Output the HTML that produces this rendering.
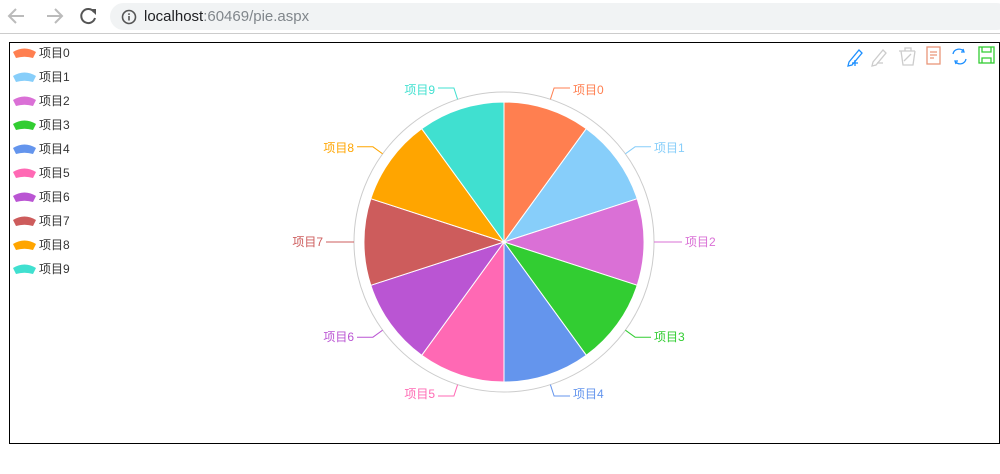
<!DOCTYPE html>
<html><head><meta charset="utf-8"><style>
body{margin:0;width:1000px;height:474px;background:#fff;overflow:hidden;font-family:"Liberation Sans","Noto Sans CJK SC",sans-serif;}
#bar{position:absolute;left:0;top:0;width:1000px;height:33px;background:#fff;border-bottom:1px solid #ccc;}
#url{position:absolute;left:110px;top:3px;width:900px;height:27px;border-radius:14px;background:#f1f3f4;}
#url span{position:absolute;left:34px;top:5px;font-size:15px;color:#202124;}
#box{position:absolute;left:9px;top:42px;width:989px;height:400px;border:1px solid #000;}
</style></head><body>
<div id="bar">
<svg width="110" height="33" style="position:absolute;left:0;top:0">
<path d="M24 16H10M16 9l-7 7 7 7" stroke="#bbb" stroke-width="2" fill="none"/>
<path d="M47 16h14M55 9l7 7-7 7" stroke="#bbb" stroke-width="2" fill="none"/>
<path d="M94 12a7 7 0 1 0 1 6" stroke="#555" stroke-width="2" fill="none"/><path d="M90 9h6v6z" fill="#555"/>
</svg>
<div id="url"><svg width="20" height="20" style="position:absolute;left:10px;top:4px"><circle cx="9" cy="10" r="6.5" stroke="#555" stroke-width="1.6" fill="none"/><rect x="8.2" y="9" width="1.6" height="4.5" fill="#555"/><rect x="8.2" y="6.3" width="1.6" height="1.6" fill="#555"/></svg><span>localhost<span style="position:static;color:#80868b">:60469/pie.aspx</span></span></div>
</div>
<div id="box"></div>
<svg width="1000" height="474" style="position:absolute;left:0;top:0" font-family="Liberation Sans, Noto Sans CJK SC, sans-serif" font-size="12">
<defs><path id="fan" d="M13 52Q24.5 45 36 52L33 58Q24.5 55.5 16 58Z"/></defs>
<use href="#fan" fill="#ff7f50"/>
<use href="#fan" fill="#87cefa" y="24"/>
<use href="#fan" fill="#da70d6" y="48"/>
<use href="#fan" fill="#32cd32" y="72"/>
<use href="#fan" fill="#6495ed" y="96"/>
<use href="#fan" fill="#ff69b4" y="120"/>
<use href="#fan" fill="#ba55d3" y="144"/>
<use href="#fan" fill="#cd5c5c" y="168"/>
<use href="#fan" fill="#ffa500" y="192"/>
<use href="#fan" fill="#40e0d0" y="216"/>
<g fill="#333"><text x="39" y="57">项目0</text><text x="39" y="81">项目1</text><text x="39" y="105">项目2</text><text x="39" y="129">项目3</text><text x="39" y="153">项目4</text><text x="39" y="177">项目5</text><text x="39" y="201">项目6</text><text x="39" y="225">项目7</text><text x="39" y="249">项目8</text><text x="39" y="273">项目9</text></g>
<circle cx="504" cy="242" r="150" fill="none" stroke="#ccc" stroke-width="1"/>
<g stroke="#fff" stroke-width="1">
<path d="M504 242L504 102A140 140 0 0 1 586.3 128.7Z" fill="#ff7f50"/>
<path d="M504 242L586.3 128.7A140 140 0 0 1 637.2 198.7Z" fill="#87cefa"/>
<path d="M504 242L637.2 198.7A140 140 0 0 1 637.2 285.3Z" fill="#da70d6"/>
<path d="M504 242L637.2 285.3A140 140 0 0 1 586.3 355.3Z" fill="#32cd32"/>
<path d="M504 242L586.3 355.3A140 140 0 0 1 504 382Z" fill="#6495ed"/>
<path d="M504 242L504 382A140 140 0 0 1 421.7 355.3Z" fill="#ff69b4"/>
<path d="M504 242L421.7 355.3A140 140 0 0 1 370.8 285.3Z" fill="#ba55d3"/>
<path d="M504 242L370.8 285.3A140 140 0 0 1 370.8 198.7Z" fill="#cd5c5c"/>
<path d="M504 242L370.8 198.7A140 140 0 0 1 421.7 128.7Z" fill="#ffa500"/>
<path d="M504 242L421.7 128.7A140 140 0 0 1 504 102Z" fill="#40e0d0"/>
</g>
<g fill="none" stroke-width="1">
<path d="M550.4 99.3L554.1 88H570" stroke="#ff7f50"/>
<path d="M625.4 153.8L635.1 146.8H651" stroke="#87cefa"/>
<path d="M654 242H682" stroke="#da70d6"/>
<path d="M625.4 330.2L635.1 337.2H651" stroke="#32cd32"/>
<path d="M550.4 384.7L554.1 396H570" stroke="#6495ed"/>
<path d="M457.6 384.7L453.9 396H438" stroke="#ff69b4"/>
<path d="M382.6 330.2L372.9 337.2H357" stroke="#ba55d3"/>
<path d="M354 242H326" stroke="#cd5c5c"/>
<path d="M382.6 153.8L372.9 146.8H357" stroke="#ffa500"/>
<path d="M457.6 99.3L453.9 88H438" stroke="#40e0d0"/>
</g>
<text x="573" y="94" fill="#ff7f50">项目0</text>
<text x="654" y="152" fill="#87cefa">项目1</text>
<text x="685" y="246" fill="#da70d6">项目2</text>
<text x="654" y="341" fill="#32cd32">项目3</text>
<text x="573" y="398" fill="#6495ed">项目4</text>
<g text-anchor="end">
<text x="435" y="398" fill="#ff69b4">项目5</text>
<text x="354" y="341" fill="#ba55d3">项目6</text>
<text x="323" y="246" fill="#cd5c5c">项目7</text>
<text x="354" y="152" fill="#ffa500">项目8</text>
<text x="435" y="94" fill="#40e0d0">项目9</text>
</g>
<g fill="none" stroke-width="1.3">
<path d="M849 62l10-12 3 3-10 12-4 1z" stroke="#1e90ff"/><path d="M855 60v6M852 63h6" stroke="#1e90ff"/>
<path d="M873 62l10-12 3 3-10 12-4 1z" stroke="#ccc"/><path d="M877 63h6" stroke="#ccc"/>
<path d="M899 51h16M901 51l2 14h10l2-14M905 51v-3h6v3M904 61l7-7" stroke="#ccc"/>
<rect x="927" y="47" width="13" height="17" stroke="#e9967a"/><path d="M930 52h7M930 55h7M930 58h4" stroke="#e9967a"/>
<path d="M953 54a6 6 0 0 1 11-2M966 59a6 6 0 0 1-11 2M963 49l1 3-3 0M956 64l-1-3 3 0" stroke="#1e90ff"/>
<rect x="979" y="47" width="15" height="16" stroke="#32cd32"/><path d="M982 47v5h9v-5M982 63v-5h9v5" stroke="#32cd32"/>
</g>
</svg>
</body></html>
